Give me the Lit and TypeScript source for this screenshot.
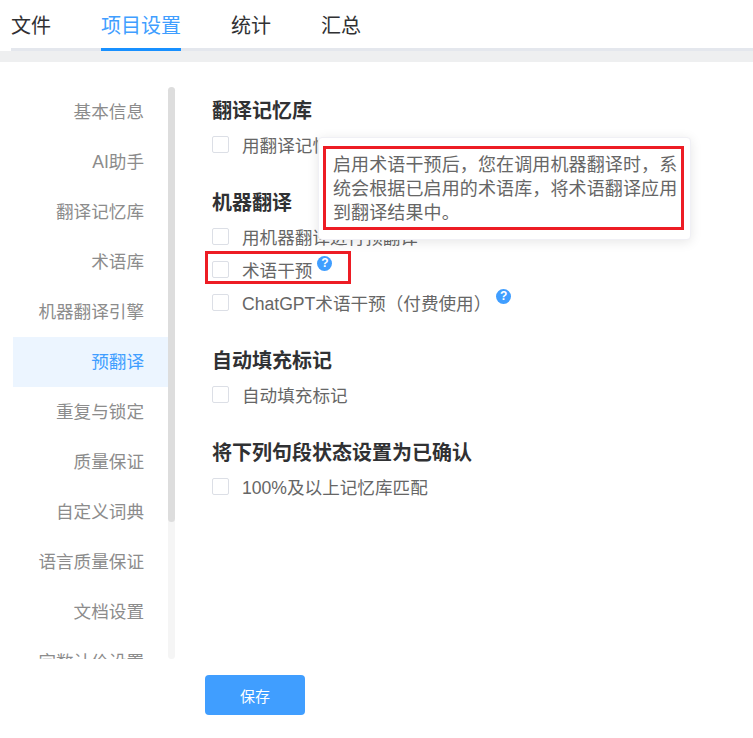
import { LitElement, html, css } from "lit";
import { customElement } from "lit/decorators.js";

const NAV = ["基本信息","AI助手","翻译记忆库","术语库","机器翻译引擎","预翻译","重复与锁定","质量保证","自定义词典","语言质量保证","文档设置","字数计价设置"];

@customElement("app-root")
export class AppRoot extends LitElement {
  static styles = css`
    :host { display: block; position: relative; width: 753px; height: 738px; overflow: hidden; background: #fff;
      font-family: "Liberation Sans", "Noto Sans CJK SC", sans-serif; color: #606266; }
    .tabs { display: flex; height: 48px; gap: 50px; margin-left: 11px; }
    .tab { font-size: 20px; line-height: 28px; padding-top: 12px; color: #303133; height: 48px; box-sizing: border-box; position: relative; }
    .tab.on { color: #409eff; }
    .tab.on::after { content: ""; position: absolute; left: 0; right: 0; top: 48px; height: 3px; background: #1890ff; }
    .rule { margin-left: 11px; height: 3px; background: #e4e7ed; }
    .band { height: 11px; background: #eeeff0; }
    .main { display: flex; height: 572px; margin-top: 25px; padding-left: 13px; }
    .nav { width: 155px; height: 572px; overflow: hidden; flex: none; }
    .item { height: 50px; line-height: 50px; text-align: right; padding-right: 24px; font-size: 17.6px; color: #8c8c8c; box-sizing: border-box; }
    .item.on { background: #ecf5ff; color: #409eff; }
    .track { width: 7px; height: 572px; background: #f5f5f5; border-radius: 4px; flex: none; }
    .thumb { height: 435px; background: #dddddd; border-radius: 4px; }
    .content { margin-left: 37px; padding-top: 10px; flex: 1; }
    h3 { margin: 0 0 3px; font-size: 20px; line-height: 28px; font-weight: 700; color: #303133; }
    .group { margin-bottom: 28px; }
    .row { display: flex; align-items: center; height: 33px; font-size: 17.6px; color: #666; }
    .box { width: 17px; height: 17px; border: 1px solid #dcdfe6; border-radius: 2px; box-sizing: border-box; margin-right: 13px; background: #fff; flex: none; }
    .help { width: 15px; height: 15px; border-radius: 50%; background: #409eff; color: #fff; font-size: 12px; line-height: 15px; font-weight: 700; text-align: center; align-self: flex-start; margin: 3px 0 0 5px; flex: none; }
    .save { margin: 16px 0 0 205px; width: 100px; height: 40px; background: #409eff; border-radius: 4px; border: 0; color: #fff; font: inherit; font-size: 15px; padding: 0; display: block; }
    .tip { position: absolute; left: 318px; top: 137px; width: 373px; height: 103px; box-sizing: border-box; background: #fff; border: 1px solid #f0f0f5; border-radius: 4px;
      box-shadow: 0 2px 12px rgba(0,0,0,.1); padding: 15px 10px 0 14px; font-size: 18px; letter-spacing: 0.12px; line-height: 24px; color: #666; }
    .mark { position: absolute; border: 3px solid #ed1c24; box-sizing: border-box; }
    .m1 { left: 323px; top: 146px; width: 361px; height: 84px; }
    .m2 { left: 205px; top: 251px; width: 146px; height: 33px; }
  `;
  render() {
    return html`
      <div class="tabs">
        <div class="tab">文件</div><div class="tab on">项目设置</div><div class="tab">统计</div><div class="tab">汇总</div>
      </div>
      <div class="rule"></div>
      <div class="band"></div>
      <div class="main">
        <div class="nav">${NAV.map((n) => html`<div class="item ${n === "预翻译" ? "on" : ""}">${n}</div>`)}</div>
        <div class="track"><div class="thumb"></div></div>
        <div class="content">
          <div class="group"><h3>翻译记忆库</h3><div class="row"><span class="box"></span>用翻译记忆库进行预翻译</div></div>
          <div class="group">
            <h3>机器翻译</h3>
            <div class="row"><span class="box"></span>用机器翻译进行预翻译</div>
            <div class="row"><span class="box"></span>术语干预<span class="help">?</span></div>
            <div class="row"><span class="box"></span>ChatGPT术语干预（付费使用）<span class="help">?</span></div>
          </div>
          <div class="group"><h3>自动填充标记</h3><div class="row"><span class="box"></span>自动填充标记</div></div>
          <div class="group"><h3>将下列句段状态设置为已确认</h3><div class="row"><span class="box"></span>100%及以上记忆库匹配</div></div>
        </div>
      </div>
      <button class="save">保存</button>
      <div class="tip">启用术语干预后，您在调用机器翻译时，系统会根据已启用的术语库，将术语翻译应用到翻译结果中。</div>
      <div class="mark m1"></div>
      <div class="mark m2"></div>
    `;
  }
}
